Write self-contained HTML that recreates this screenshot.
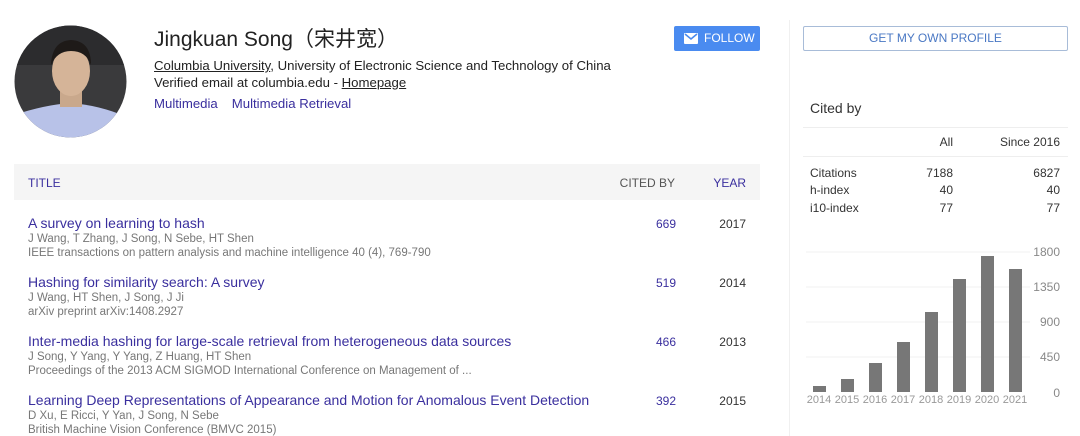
<!DOCTYPE html>
<html><head><meta charset="utf-8"><style>
*{margin:0;padding:0;box-sizing:border-box}
body{width:1080px;height:436px;overflow:hidden;background:#fff;font-family:"Liberation Sans","Noto Sans CJK SC",sans-serif;position:relative;color:#222}
.a{position:absolute;white-space:nowrap}
.t{color:#3a2f9e;font-size:14px}
.au{color:#777;font-size:11.5px}
.n{font-size:12px;color:#3a2f9e;text-align:right;width:60px}
.y{font-size:12px;color:#333;text-align:right;width:60px}
.s{font-size:12px;color:#333}
</style></head><body>
<svg class="a" style="left:14px;top:25px" width="113" height="113" viewBox="0 0 113 113">
<defs><clipPath id="c"><circle cx="56.5" cy="56.5" r="56"/></clipPath></defs>
<g clip-path="url(#c)">
<rect width="113" height="113" fill="#3a3a3c"/>
<rect x="0" y="0" width="113" height="40" fill="#2c2c2e"/>
<path d="M0 90 Q30 80 56 78 Q85 80 113 92 L113 113 L0 113Z" fill="#b8c2e8"/>
<rect x="46" y="62" width="22" height="20" fill="#c9a88c"/>
<ellipse cx="57" cy="46" rx="19" ry="25" fill="#d5b498"/>
<path d="M37 40 Q38 16 57 15 Q77 16 77 40 Q72 26 57 26 Q43 26 37 40Z" fill="#1e1a18"/>
</g></svg>
<div class="a" style="left:154px;top:23px;font-size:21px;color:#222">Jingkuan Song（宋井宽）</div>
<div class="a" style="left:154px;top:58px;font-size:13.2px;color:#222"><u>Columbia University</u>, University of Electronic Science and Technology of China</div>
<div class="a" style="left:154px;top:75px;font-size:13.2px;color:#222">Verified email at columbia.edu - <u>Homepage</u></div>
<div class="a" style="left:154px;top:96px;font-size:13.2px;color:#3a2f9e">Multimedia<span style="display:inline-block;width:14px"></span>Multimedia Retrieval</div>
<div class="a" style="left:674px;top:26px;width:86px;height:25px;background:#4a8bf0;border-radius:2px;color:#fff;font-size:12px;line-height:25px;padding-left:30px">FOLLOW
<svg style="position:absolute;left:10px;top:7px" width="14" height="11" viewBox="0 0 14 11"><rect width="14" height="11" rx="1" fill="#fff"/><path d="M1 1 L7 6 L13 1" stroke="#4a8bf0" stroke-width="1.6" fill="none"/></svg></div>
<div class="a" style="left:789px;top:20px;width:1px;height:416px;background:#f0f0f0"></div>
<div class="a" style="left:803px;top:26px;width:265px;height:25px;border:1px solid #a8bcd8;border-radius:2px;color:#4a78c4;font-size:12px;line-height:23px;text-align:center">GET MY OWN PROFILE</div>
<div class="a" style="left:14px;top:164px;width:746px;height:36px;background:#f5f5f5"></div>
<div class="a" style="left:28px;top:176px;font-size:12px;color:#3a2f9e">TITLE</div>
<div class="a" style="left:595px;top:176px;font-size:12px;color:#555;width:80px;text-align:right">CITED BY</div>
<div class="a" style="left:686px;top:176px;font-size:12px;color:#3a2f9e;width:60px;text-align:right">YEAR</div>

<div class="a t" style="left:28px;top:215px">A survey on learning to hash</div>
<div class="a au" style="left:28px;top:233px">J Wang, T Zhang, J Song, N Sebe, HT Shen</div>
<div class="a au" style="left:28px;top:247px">IEEE transactions on pattern analysis and machine intelligence 40 (4), 769-790</div>
<div class="a n" style="left:616px;top:217px">669</div><div class="a y" style="left:686px;top:217px">2017</div>

<div class="a t" style="left:28px;top:274px">Hashing for similarity search: A survey</div>
<div class="a au" style="left:28px;top:292px">J Wang, HT Shen, J Song, J Ji</div>
<div class="a au" style="left:28px;top:306px">arXiv preprint arXiv:1408.2927</div>
<div class="a n" style="left:616px;top:276px">519</div><div class="a y" style="left:686px;top:276px">2014</div>

<div class="a t" style="left:28px;top:333px">Inter-media hashing for large-scale retrieval from heterogeneous data sources</div>
<div class="a au" style="left:28px;top:351px">J Song, Y Yang, Y Yang, Z Huang, HT Shen</div>
<div class="a au" style="left:28px;top:365px">Proceedings of the 2013 ACM SIGMOD International Conference on Management of ...</div>
<div class="a n" style="left:616px;top:335px">466</div><div class="a y" style="left:686px;top:335px">2013</div>

<div class="a t" style="left:28px;top:392px">Learning Deep Representations of Appearance and Motion for Anomalous Event Detection</div>
<div class="a au" style="left:28px;top:410px">D Xu, E Ricci, Y Yan, J Song, N Sebe</div>
<div class="a au" style="left:28px;top:424px">British Machine Vision Conference (BMVC 2015)</div>
<div class="a n" style="left:616px;top:394px">392</div><div class="a y" style="left:686px;top:394px">2015</div>

<div class="a" style="left:810px;top:100px;font-size:14px;color:#333">Cited by</div>
<div class="a" style="left:803px;top:127px;width:265px;height:1px;background:#eee"></div>
<div class="a s" style="left:893px;top:135px;width:60px;text-align:right">All</div>
<div class="a s" style="left:980px;top:135px;width:80px;text-align:right">Since 2016</div>
<div class="a" style="left:803px;top:156px;width:265px;height:1px;background:#eee"></div>
<div class="a s" style="left:810px;top:166px">Citations</div><div class="a s" style="left:893px;top:166px;width:60px;text-align:right">7188</div><div class="a s" style="left:1000px;top:166px;width:60px;text-align:right">6827</div>
<div class="a s" style="left:810px;top:183px">h-index</div><div class="a s" style="left:893px;top:183px;width:60px;text-align:right">40</div><div class="a s" style="left:1000px;top:183px;width:60px;text-align:right">40</div>
<div class="a s" style="left:810px;top:201px">i10-index</div><div class="a s" style="left:893px;top:201px;width:60px;text-align:right">77</div><div class="a s" style="left:1000px;top:201px;width:60px;text-align:right">77</div>

<svg class="a" style="left:800px;top:240px" width="280" height="170">
<g stroke="#f2f2f2" stroke-width="1">
<line x1="6" y1="12" x2="230" y2="12"/><line x1="6" y1="47" x2="230" y2="47"/><line x1="6" y1="82" x2="230" y2="82"/><line x1="6" y1="117" x2="230" y2="117"/>
</g>
<g fill="#777">
<rect x="13" y="146" width="13" height="6"/><rect x="41" y="139" width="13" height="13"/><rect x="69" y="123" width="13" height="29"/><rect x="97" y="102" width="13" height="50"/><rect x="125" y="72" width="13" height="80"/><rect x="153" y="39" width="13" height="113"/><rect x="181" y="16" width="13" height="136"/><rect x="209" y="29" width="13" height="123"/>
</g>
<g font-family="Liberation Sans" font-size="11" fill="#999" text-anchor="middle">
<text x="19" y="163">2014</text><text x="47" y="163">2015</text><text x="75" y="163">2016</text><text x="103" y="163">2017</text><text x="131" y="163">2018</text><text x="159" y="163">2019</text><text x="187" y="163">2020</text><text x="215" y="163">2021</text>
</g>
<g font-family="Liberation Sans" font-size="12" fill="#888" text-anchor="end">
<text x="260" y="16">1800</text><text x="260" y="51">1350</text><text x="260" y="86">900</text><text x="260" y="121">450</text><text x="260" y="157">0</text>
</g>
</svg>
</body></html>
